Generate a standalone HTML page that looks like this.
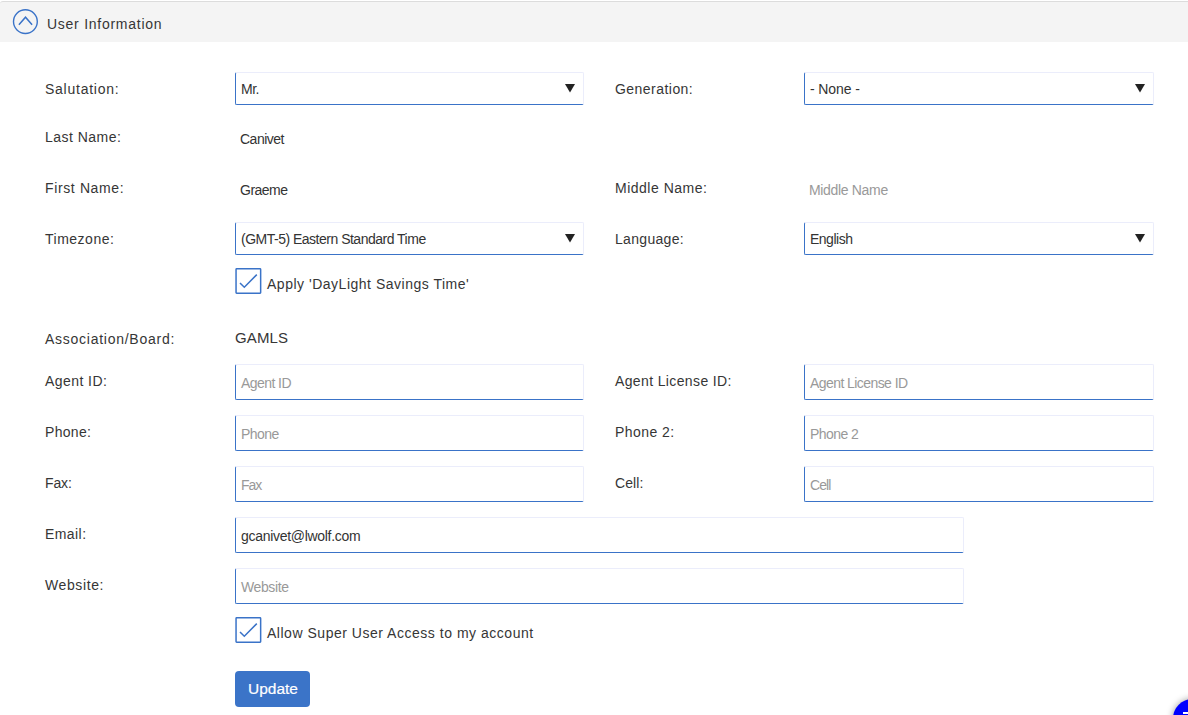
<!DOCTYPE html>
<html><head><meta charset="utf-8">
<style>
html,body{margin:0;padding:0;background:#fff;width:1188px;height:715px;overflow:hidden;position:relative;font-family:"Liberation Sans",sans-serif;}
.a{position:absolute;white-space:nowrap;}
.hdr{position:absolute;left:0;top:1px;width:1188px;height:40px;background:#f4f4f4;border-top:1px solid #dcdcdc;border-top-left-radius:3px;}
.ttl{left:47px;top:16px;font-size:14px;letter-spacing:0.74px;color:#363636;line-height:16px;}
.lb{font-size:14px;letter-spacing:0.75px;color:#363636;line-height:16px;}
.box{position:absolute;box-sizing:border-box;background:#fff;border-top:1px solid #ebedfb;border-right:1px solid #ebedfb;border-left:1px solid #3a73c8;border-bottom:1px solid #3a73c8;border-radius:2px;}
.tx{font-size:14px;letter-spacing:-0.5px;color:#333;line-height:15px;}
.ph{font-size:14px;letter-spacing:-0.57px;color:#999;line-height:15px;}
.arr{position:absolute;width:0;height:0;border-left:5px solid transparent;border-right:5px solid transparent;border-top:8px solid #222;}
.cb{position:absolute;box-sizing:border-box;width:26px;height:26px;border:2px solid #3b73cc;border-radius:2px;background:#fff;}
.btn{position:absolute;left:235px;top:671px;width:75px;height:36px;background:#3b74c8;border-radius:4px;}
</style></head><body>
<div class="hdr"></div>
<svg class="a" style="left:12px;top:8px" width="27" height="27" viewBox="0 0 27 27"><circle cx="13.4" cy="13.6" r="11.9" fill="none" stroke="#3a73c8" stroke-width="1.4"/><path d="M6.9 16.8 L13.5 9.2 L20.1 16.8" fill="none" stroke="#3a73c8" stroke-width="1.5"/></svg>
<div class="a ttl">User Information</div>

<!-- left labels (baseline y) -->
<div class="a lb" style="left:45px;top:81px;letter-spacing:0.75px">Salutation:</div>
<div class="a lb" style="left:45px;top:129px;letter-spacing:0.48px">Last Name:</div>
<div class="a lb" style="left:45px;top:180px;letter-spacing:0.63px">First Name:</div>
<div class="a lb" style="left:45px;top:231px;letter-spacing:0.5px">Timezone:</div>
<div class="a lb" style="left:45px;top:331px;letter-spacing:0.74px">Association/Board:</div>
<div class="a lb" style="left:45px;top:373px;letter-spacing:0.43px">Agent ID:</div>
<div class="a lb" style="left:45px;top:424px;letter-spacing:0.31px">Phone:</div>
<div class="a lb" style="left:45px;top:475px;letter-spacing:-0.15px">Fax:</div>
<div class="a lb" style="left:45px;top:526px;letter-spacing:0.43px">Email:</div>
<div class="a lb" style="left:45px;top:577px;letter-spacing:0.61px">Website:</div>

<!-- right labels -->
<div class="a lb" style="left:615px;top:81px;letter-spacing:0.46px">Generation:</div>
<div class="a lb" style="left:615px;top:180px;letter-spacing:0.5px">Middle Name:</div>
<div class="a lb" style="left:615px;top:231px;letter-spacing:0.31px">Language:</div>
<div class="a lb" style="left:615px;top:373px;letter-spacing:0.37px">Agent License ID:</div>
<div class="a lb" style="left:615px;top:424px;letter-spacing:0.43px">Phone 2:</div>
<div class="a lb" style="left:615px;top:475px;letter-spacing:0.08px">Cell:</div>

<!-- selects -->
<div class="box" style="left:235px;top:72px;width:349px;height:33px"></div>
<div class="a tx" style="left:241px;top:82px">Mr.</div>
<svg class="a" style="left:565px;top:84px" width="10" height="9" viewBox="0 0 10 9"><polygon points="0,0 10,0 5,8.6" fill="#222"/></svg>

<div class="box" style="left:804px;top:72px;width:350px;height:33px"></div>
<div class="a tx" style="left:810px;top:82px;letter-spacing:-0.1px">- None -</div>
<svg class="a" style="left:1135px;top:84px" width="10" height="9" viewBox="0 0 10 9"><polygon points="0,0 10,0 5,8.6" fill="#222"/></svg>

<div class="a tx" style="left:240px;top:132px">Canivet</div>
<div class="a tx" style="left:240px;top:183px">Graeme</div>
<div class="a ph" style="left:809px;top:183px;letter-spacing:-0.33px">Middle Name</div>

<div class="box" style="left:235px;top:222px;width:349px;height:33px"></div>
<div class="a tx" style="left:241px;top:232px">(GMT-5) Eastern Standard Time</div>
<svg class="a" style="left:565px;top:234px" width="10" height="9" viewBox="0 0 10 9"><polygon points="0,0 10,0 5,8.6" fill="#222"/></svg>

<div class="box" style="left:804px;top:222px;width:350px;height:33px"></div>
<div class="a tx" style="left:810px;top:232px">English</div>
<svg class="a" style="left:1135px;top:234px" width="10" height="9" viewBox="0 0 10 9"><polygon points="0,0 10,0 5,8.6" fill="#222"/></svg>

<svg class="a" style="left:235px;top:268px" width="27" height="27" viewBox="0 0 27 27"><rect x="1.05" y="0.8" width="24.6" height="24.4" rx="0.6" fill="#fff" stroke="#3a73c8" stroke-width="1.5"/><path d="M5 15 L9.3 19.2 L21.8 6.6" fill="none" stroke="#3a73c8" stroke-width="1.5"/></svg>
<div class="a lb" style="left:267px;top:276px;letter-spacing:0.51px">Apply 'DayLight Savings Time'</div>

<div class="a lb" style="left:235px;top:330px;font-size:15px;letter-spacing:0.15px">GAMLS</div>

<!-- inputs -->
<div class="box" style="left:235px;top:364px;width:349px;height:36px"></div>
<div class="a ph" style="left:241px;top:376px">Agent ID</div>
<div class="box" style="left:804px;top:364px;width:350px;height:36px"></div>
<div class="a ph" style="left:810px;top:376px">Agent License ID</div>

<div class="box" style="left:235px;top:415px;width:349px;height:36px"></div>
<div class="a ph" style="left:241px;top:427px">Phone</div>
<div class="box" style="left:804px;top:415px;width:350px;height:36px"></div>
<div class="a ph" style="left:810px;top:427px">Phone 2</div>

<div class="box" style="left:235px;top:466px;width:349px;height:36px"></div>
<div class="a ph" style="left:241px;top:478px;letter-spacing:-1px">Fax</div>
<div class="box" style="left:804px;top:466px;width:350px;height:36px"></div>
<div class="a ph" style="left:810px;top:478px;letter-spacing:-0.9px">Cell</div>

<div class="box" style="left:235px;top:517px;width:729px;height:36px"></div>
<div class="a tx" style="left:241px;top:529px;letter-spacing:-0.3px">gcanivet@lwolf.com</div>
<div class="box" style="left:235px;top:568px;width:729px;height:36px"></div>
<div class="a ph" style="left:241px;top:580px;letter-spacing:-0.4px">Website</div>

<svg class="a" style="left:235px;top:617px" width="27" height="27" viewBox="0 0 27 27"><rect x="1.05" y="0.8" width="24.6" height="24.4" rx="0.6" fill="#fff" stroke="#3a73c8" stroke-width="1.5"/><path d="M5 15 L9.3 19.2 L21.8 6.6" fill="none" stroke="#3a73c8" stroke-width="1.5"/></svg>
<div class="a lb" style="left:267px;top:625px;letter-spacing:0.52px">Allow Super User Access to my account</div>

<div class="btn"></div>
<div class="a" style="left:248px;top:680px;font-size:15.5px;color:#fff;line-height:17px;-webkit-text-stroke:0.2px #fff">Update</div>

<div class="a" style="left:1173px;top:698.7px;width:39px;height:39px;border-radius:50%;background:#0000ff;box-shadow:0 0 7px rgba(0,0,0,0.4)"></div>
<div class="a" style="left:1183px;top:712px;width:10px;height:2px;background:#fff"></div>
</body></html>
